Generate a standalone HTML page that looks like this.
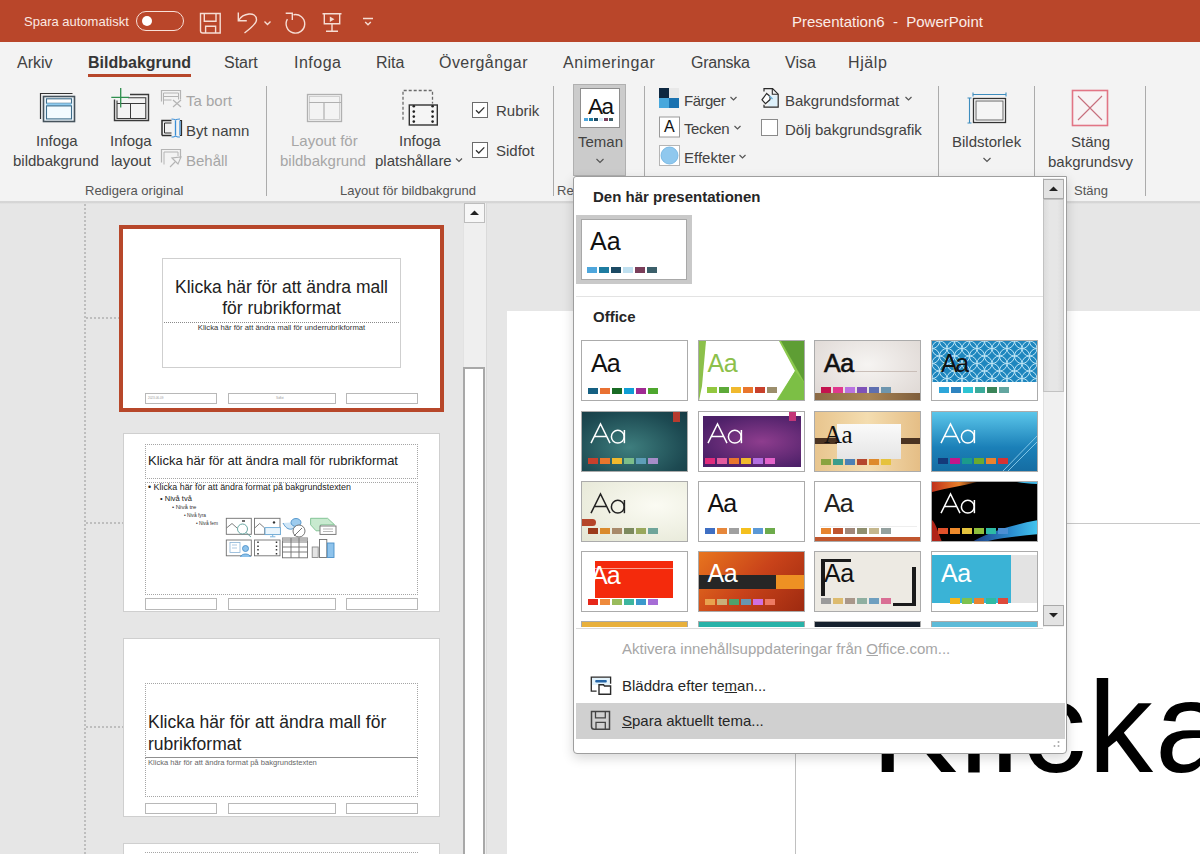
<!DOCTYPE html>
<html><head><meta charset="utf-8">
<style>
*{margin:0;padding:0;box-sizing:border-box}
html,body{width:1200px;height:854px;overflow:hidden;background:#E6E6E6;font-family:'Liberation Sans',sans-serif;color:#262626}
.a{position:absolute}
.t{position:absolute;white-space:nowrap;line-height:1}
#title{left:0;top:0;width:1200px;height:42px;background:#B9462A}
#ribbon{left:0;top:42px;width:1200px;height:160px;background:#F3F3F3;border-bottom:1px solid #D6D6D6}
.tab{font-size:16px;color:#424242;top:55px}
.rl{font-size:15px;color:#424242}
.dis{color:#A6A6A6}
.gl{font-size:13px;color:#555}
.sep{position:absolute;width:1px;background:#ABABAB}
</style></head><body>

<!-- TITLE BAR -->
<div id="title" class="a"></div>
<div class="t" style="left:24px;top:15px;font-size:13px;color:#FBE9E3">Spara automatiskt</div>
<div class="a" style="left:136px;top:11px;width:48px;height:20px;border:1.5px solid #F8E0D8;border-radius:10px"></div>
<div class="a" style="left:142px;top:16px;width:10px;height:10px;border-radius:5px;background:#FFF"></div>
<div class="t" style="left:792px;top:14px;font-size:15px;color:#FBEDE8;white-space:pre">Presentation6  -  PowerPoint</div>


<!-- QAT icons -->
<svg class="a" style="left:196px;top:10px" width="190" height="26" viewBox="0 0 190 26" fill="none" stroke="#F6DDD4" stroke-width="1.4">
  <!-- save -->
  <path d="M4.5 3.5H24.2V23H6.8Q4.5 23 4.5 20.7Z"/>
  <path d="M8.3 3.5V11.2H20V3.5"/>
  <path d="M9.6 23V16.2H19.6V23"/>
  <!-- undo -->
  <path d="M42.3 2.5v8.3h8.5"/>
  <path d="M42.5 10.5C47 3 60 1 60.5 9.5c0.3 4-6 9-12 13.5"/>
  <!-- chevron -->
  <path d="M68.5 11.5l3 3 3-3"/>
  <!-- redo circle -->
  <path d="M97.5 4.7A9.3 9.3 0 1 1 91.4 9.1"/>
  <path d="M89.7 3.3h6.6v6.7"/>
  <!-- present -->
  <path d="M126.5 3.8h19M128.3 3.8v10h15.4v-10M136 13.8v7.5M130 21.3h12"/>
  <path d="M133.8 6.5l4.6 2.8-4.6 2.8z" fill="#F6DDD4" stroke="none"/>
  <!-- customize -->
  <path d="M167 8.5h10M169.2 12l2.8 2.8 2.8-2.8"/>
</svg>

<!-- RIBBON -->
<div id="ribbon" class="a"></div>
<div class="t tab" style="left:17px">Arkiv</div>
<div class="t tab" style="left:88px;font-weight:700;color:#363636">Bildbakgrund</div>
<div class="a" style="left:88px;top:74px;width:103px;height:3px;background:#B7472A"></div>
<div class="t tab" style="left:224px">Start</div>
<div class="t tab" style="left:294px;letter-spacing:0.5px">Infoga</div>
<div class="t tab" style="left:376px">Rita</div>
<div class="t tab" style="left:439px;letter-spacing:0.45px">Övergångar</div>
<div class="t tab" style="left:563px;letter-spacing:0.55px">Animeringar</div>
<div class="t tab" style="left:691px;letter-spacing:-0.25px">Granska</div>
<div class="t tab" style="left:785px">Visa</div>
<div class="t tab" style="left:848px;letter-spacing:0.6px">Hjälp</div>



<!-- WORKSPACE -->
<div class="a" style="left:0;top:202px;width:1200px;height:2px;background:linear-gradient(#D0D0D0,#E6E6E6)"></div>
<!-- dotted guides -->
<div class="a" style="left:84px;top:204px;width:2px;height:650px;background:repeating-linear-gradient(180deg,#BEBEBE 0 2px,transparent 2px 4px)"></div>
<div class="a" style="left:86px;top:317px;width:33px;height:2px;background:repeating-linear-gradient(90deg,#BEBEBE 0 2px,transparent 2px 4px)"></div>
<div class="a" style="left:86px;top:522px;width:37px;height:2px;background:repeating-linear-gradient(90deg,#BEBEBE 0 2px,transparent 2px 4px)"></div>
<div class="a" style="left:86px;top:726px;width:37px;height:2px;background:repeating-linear-gradient(90deg,#BEBEBE 0 2px,transparent 2px 4px)"></div>

<!-- SLIDE 1 (selected) -->
<div class="a" style="left:119px;top:225px;width:325px;height:187px;border:4px solid #B7472A;background:#FFF"></div>
<div class="a" style="left:162px;top:258px;width:239px;height:65px;border:1px solid #CFCFCF;border-bottom:1px dotted #8A8A8A"></div>
<div class="a" style="left:162px;top:322px;width:239px;height:46px;border:1px solid #CFCFCF;border-top:0"></div>
<div class="t" style="left:163px;top:277px;width:237px;text-align:center;font-size:17.5px;color:#222;line-height:21px">Klicka här för att ändra mall<br>för rubrikformat</div>
<div class="t" style="left:163px;top:324px;width:237px;text-align:center;font-size:7.7px;color:#333">Klicka här för att ändra mall för underrubrikformat</div>
<div class="a" style="left:145px;top:393px;width:72px;height:11px;border:1px solid #B8B8B8"></div>
<div class="a" style="left:228px;top:393px;width:108px;height:11px;border:1px solid #B8B8B8"></div>
<div class="a" style="left:346px;top:393px;width:72px;height:11px;border:1px solid #B8B8B8"></div>
<div class="t" style="left:148px;top:397px;font-size:3px;color:#999">2023-06-09</div>
<div class="t" style="left:276px;top:397px;font-size:3px;color:#999">Sidfot</div>

<!-- SLIDE 2 -->
<div class="a" style="left:123px;top:433px;width:317px;height:179px;border:1px solid #CFCFCF;background:#FFF"></div>
<div class="a" style="left:145px;top:444px;width:273px;height:35px;border:1px dotted #A5A5A5"></div>
<div class="a" style="left:145px;top:482px;width:273px;height:113px;border:1px dotted #A5A5A5"></div>
<div class="t" style="left:148px;top:454px;font-size:13px;color:#222">Klicka här för att ändra mall för rubrikformat</div>
<div class="t" style="left:148px;top:483px;font-size:8.9px;color:#222">• Klicka här för att ändra format på bakgrundstexten</div>
<div class="t" style="left:160px;top:495px;font-size:7.5px;color:#222">• Nivå två</div>
<div class="t" style="left:172px;top:504px;font-size:6px;color:#333">• Nivå tre</div>
<div class="t" style="left:184px;top:513.5px;font-size:4.8px;color:#333">• Nivå fyra</div>
<div class="t" style="left:196px;top:522px;font-size:4.8px;color:#333">• Nivå fem</div>
<svg class="a" style="left:225px;top:517px" width="120" height="43" viewBox="0 0 120 43" fill="none" stroke-width="0.9">
  <rect x="1.3" y="1.3" width="25" height="16" stroke="#707070"/>
  <path d="M1.5 11l5.5-4.5 5 4.5" stroke="#707070"/>
  <path d="M17 4h3" stroke="#333" stroke-width="1.4"/>
  <circle cx="17.5" cy="12" r="5" stroke="#5A9E9A" fill="#FFF"/><path d="M21 15.5l5 4.5" stroke="#5A9E9A"/>
  <rect x="29.5" y="1.3" width="25.5" height="16" stroke="#707070"/>
  <path d="M29.7 11l5-4.5 5 4.5V17" stroke="#707070"/>
  <circle cx="49" cy="5.4" r="1.2" fill="#333" stroke="none"/>
  <rect x="40" y="10.6" width="15.4" height="7" fill="#EAF5FC" stroke="#6AAAD8"/><path d="M47.7 17.6v2M45 19.8h5.4" stroke="#6AAAD8"/>
  <path d="M58 6c2 4 5 7 9 6 3-1 5-3 6-7" stroke="#4A90C8" fill="#CFE6F7"/>
  <ellipse cx="71" cy="5.5" rx="5" ry="4" fill="#9CCBEE" stroke="#4A90C8"/>
  <circle cx="74" cy="14" r="6" fill="#FFF" stroke="#666"/><path d="M69 19l8-8" stroke="#666"/>
  <path d="M85.6 1.3h17l7 6.5h-14v6H91l-5.4-6z" fill="#C8EACF" stroke="#7CC08E"/>
  <rect x="95" y="9" width="16" height="8.4" fill="#FFF" stroke="#707070"/><path d="M98 12h10M98 14.5h10" stroke="#999" stroke-width="0.7"/>
  <rect x="1.3" y="23" width="25" height="15.8" stroke="#707070"/>
  <rect x="5" y="25.5" width="10" height="10" stroke="#8AB3D6" stroke-width="0.8"/><path d="M7 28h5M7 31h5" stroke="#8AB3D6" stroke-width="0.7"/>
  <circle cx="20.5" cy="31.5" r="3" fill="#8EC3EC" stroke="#4A90C8"/><path d="M15.5 40c1-4 9-4 10 0" fill="#8EC3EC" stroke="#4A90C8"/>
  <rect x="29.5" y="23" width="25.5" height="15.8" stroke="#707070"/>
  <path d="M33 24.5v1.5M33 28.5v1.5M33 32v1.5M33 36v1.5M51.5 24.5v1.5M51.5 28.5v1.5M51.5 32v1.5M51.5 36v1.5" stroke="#333" stroke-width="1.5"/>
  <rect x="57.5" y="21" width="25" height="19.8" stroke="#707070"/>
  <rect x="57.5" y="21" width="25" height="3" fill="#B8B8B8" stroke="none"/>
  <path d="M57.5 25h25M57.5 30h25M57.5 35h25M66 21v19.8M74 21v19.8" stroke="#707070"/>
  <rect x="87.2" y="30" width="6" height="10.5" fill="#E4E4E4" stroke="#8A8A8A"/>
  <rect x="94.5" y="22.5" width="7.3" height="18" fill="#FFF" stroke="#707070"/>
  <rect x="102.3" y="26" width="6.7" height="14.5" fill="#8EC3EC" stroke="#4A90C8"/>
</svg>
<div class="a" style="left:145px;top:598px;width:72px;height:12px;border:1px solid #B8B8B8"></div>
<div class="a" style="left:228px;top:598px;width:108px;height:12px;border:1px solid #B8B8B8"></div>
<div class="a" style="left:346px;top:598px;width:72px;height:12px;border:1px solid #B8B8B8"></div>

<!-- SLIDE 3 -->
<div class="a" style="left:123px;top:638px;width:317px;height:179px;border:1px solid #CFCFCF;background:#FFF"></div>
<div class="a" style="left:145px;top:683px;width:273px;height:75px;border:1px dotted #A5A5A5"></div>
<div class="a" style="left:145px;top:757px;width:273px;height:40px;border:1px dotted #A5A5A5;border-top:1px solid #8F8F8F"></div>
<div class="t" style="left:148px;top:712px;font-size:17.5px;color:#222;line-height:21.5px">Klicka här för att ändra mall för<br>rubrikformat</div>
<div class="t" style="left:148px;top:758.5px;font-size:7.6px;color:#666">Klicka här för att ändra format på bakgrundstexten</div>
<div class="a" style="left:145px;top:803px;width:72px;height:11px;border:1px solid #B8B8B8"></div>
<div class="a" style="left:228px;top:803px;width:108px;height:11px;border:1px solid #B8B8B8"></div>
<div class="a" style="left:346px;top:803px;width:72px;height:11px;border:1px solid #B8B8B8"></div>

<!-- SLIDE 4 -->
<div class="a" style="left:123px;top:843px;width:317px;height:30px;border:1px solid #CFCFCF;background:#FFF"></div>
<div class="a" style="left:145px;top:852px;width:273px;height:10px;border-top:1px dotted #A5A5A5"></div>

<!-- pane scrollbar -->
<div class="a" style="left:463px;top:203px;width:24px;height:651px;background:#EFEFEF;border-left:1px solid #E2E2E2;border-right:1px solid #DADADA"></div>
<div class="a" style="left:464px;top:203px;width:21px;height:20px;background:#F7F7F7;border:1px solid #BDBDBD"></div>
<svg class="a" style="left:469px;top:209px" width="11" height="7" viewBox="0 0 11 7"><path d="M1 6L5.5 1.5 10 6z" fill="#222"/></svg>
<div class="a" style="left:463px;top:367px;width:22px;height:490px;background:#FFF;border:2px solid #A8A8A8;border-top-width:2px"></div>

<!-- MAIN SLIDE -->
<div class="a" style="left:507px;top:311px;width:693px;height:543px;background:#FFF"></div>
<div class="a" style="left:795px;top:523px;width:405px;height:331px;border-left:1px solid #C0C0C0;border-top:1px solid #C8C8C8"></div>
<div class="t" style="left:871px;top:662px;font-size:130px;letter-spacing:1.9px;color:#000">Klicka</div>

<!-- GROUP: Redigera original -->
<svg class="a" style="left:36px;top:88px" width="120" height="38" viewBox="0 0 120 38" fill="none">
  <!-- infoga bildbakgrund -->
  <path d="M4.5 31V5.5h32" stroke="#333" stroke-width="1.2"/>
  <rect x="7.5" y="8.5" width="31" height="25" fill="#EEF8FE" stroke="#46535C" stroke-width="1.6"/>
  <rect x="10.5" y="10.8" width="25" height="4.5" fill="#FFF" stroke="#3F6D8A" stroke-width="1.1"/>
  <rect x="10.5" y="15.3" width="25" height="2.6" fill="#8DCBF0"/>
  <rect x="10.5" y="17.9" width="25" height="13" fill="#F3FBFF" stroke="#3F6D8A" stroke-width="1.1"/>
  <!-- infoga layout -->
  <path d="M78.5 11.5V32.5H112.5V6.5H94" stroke="#3A3A3A" stroke-width="1.4"/>
  <path d="M81 12.5V30.5H109.8V9.8H92" stroke="#3A3A3A" stroke-width="1.1"/>
  <path d="M81 15.5H109.8M94.5 15.5V30.5" stroke="#3A3A3A" stroke-width="1"/>
  <path d="M84.7 0v19.5M75.3 9.3H93" stroke="#2F8F4E" stroke-width="1.3"/>
</svg>
<div class="t rl" style="left:36px;top:133px">Infoga</div>
<div class="t rl" style="left:13px;top:153px">bildbakgrund</div>
<div class="t rl" style="left:110px;top:133px">Infoga</div>
<div class="t rl" style="left:111px;top:153px">layout</div>

<svg class="a" style="left:160px;top:89px" width="24" height="80" viewBox="0 0 24 80" fill="none">
  <!-- ta bort -->
  <path d="M1.5 12.5V1.5h19v9" stroke="#B4B4B4" stroke-width="1.2"/>
  <path d="M3.5 15.5V4h15v6.5M3.5 7.5h15M3.5 11h8" stroke="#B4B4B4" stroke-width="1"/>
  <path d="M13 11l8 7M21 11l-8 7" stroke="#B4B4B4" stroke-width="1.2"/>
  <!-- byt namn -->
  <path d="M2 46.5V31.5h9.5" stroke="#2E2E2E" stroke-width="1.5"/>
  <path d="M2 46.5h9.5" stroke="#2E2E2E" stroke-width="1.5"/>
  <path d="M4.5 44V34h7" stroke="#2E2E2E" stroke-width="1"/>
  <path d="M4.5 44h7" stroke="#2E2E2E" stroke-width="1"/>
  <path d="M15.5 31.5v15M20 31.5v15" stroke="#3B8ED6" stroke-width="1.3"/>
  <path d="M11.5 30c2.5 0 4 0.5 4 1.5 0-1 1.5-1.5 4.5-1.5M11.5 48c2.5 0 4-0.5 4-1.5 0 1 1.5 1.5 4.5 1.5" stroke="#3B8ED6" stroke-width="1.1"/>
  <path d="M20 31.5h1.5v15H20" stroke="#2E2E2E" stroke-width="1.2"/>
  <!-- behall -->
  <path d="M1.5 73.5V60.5h19v9" stroke="#B4B4B4" stroke-width="1.2"/>
  <path d="M4 75.5V63h14v4" stroke="#B4B4B4" stroke-width="1"/>
  <path d="M10 78l5-5M12 69l6 6 3-7z" stroke="#B4B4B4" stroke-width="1.1"/>
</svg>
<div class="t rl dis" style="left:186px;top:93px">Ta bort</div>
<div class="t rl" style="left:186px;top:123px">Byt namn</div>
<div class="t rl dis" style="left:186px;top:153px">Behåll</div>
<div class="t gl" style="left:85px;top:184px">Redigera original</div>
<div class="sep" style="left:266px;top:86px;height:110px"></div>

<!-- GROUP: Layout för bildbakgrund -->
<svg class="a" style="left:300px;top:88px" width="150" height="40" viewBox="0 0 150 40" fill="none">
  <rect x="7.5" y="6.5" width="34" height="27" stroke="#B0B0B0" stroke-width="1.3"/>
  <rect x="9.5" y="8.5" width="30" height="23" stroke="#C8C8C8" stroke-width="0.8"/>
  <path d="M9 14.5h32M24 14.5v17" stroke="#B0B0B0" stroke-width="1.2"/>
  <!-- infoga platshallare -->
  <path d="M103 31.8V2.5h29.5v13" stroke="#6A6A6A" stroke-width="1.3" stroke-dasharray="3 2"/>
  <rect x="109.3" y="17" width="28" height="20" fill="#F5F5F5" stroke="#333" stroke-width="1.4"/>
  <g fill="#222"><circle cx="113.8" cy="18.3" r="1.3"/><circle cx="113.8" cy="23.6" r="1.3"/><circle cx="113.8" cy="28.6" r="1.3"/><circle cx="113.8" cy="33.6" r="1.3"/><circle cx="132.6" cy="18.3" r="1.3"/><circle cx="132.6" cy="23.6" r="1.3"/><circle cx="132.6" cy="28.6" r="1.3"/><circle cx="132.6" cy="33.6" r="1.3"/></g>
</svg>
<div class="t rl dis" style="left:291px;top:133px">Layout för</div>
<div class="t rl dis" style="left:280px;top:153px">bildbakgrund</div>
<div class="t rl" style="left:399px;top:133px">Infoga</div>
<div class="t rl" style="left:375px;top:153px">platshållare</div>
<svg class="a" style="left:455px;top:157px" width="8" height="6" viewBox="0 0 8 6" fill="none"><path d="M1 1.5l3 3 3-3" stroke="#555" stroke-width="1.2"/></svg>

<div class="a" style="left:472px;top:102px;width:16px;height:16px;border:1px solid #6B6B6B;background:#FFF"></div>
<svg class="a" style="left:472px;top:102px" width="16" height="16" viewBox="0 0 16 16" fill="none"><path d="M4 8.3l2.8 2.7 5.5-5.6" stroke="#333" stroke-width="1.3"/></svg>
<div class="t rl" style="left:496px;top:103px">Rubrik</div>
<div class="a" style="left:472px;top:142px;width:16px;height:16px;border:1px solid #6B6B6B;background:#FFF"></div>
<svg class="a" style="left:472px;top:142px" width="16" height="16" viewBox="0 0 16 16" fill="none"><path d="M4 8.3l2.8 2.7 5.5-5.6" stroke="#333" stroke-width="1.3"/></svg>
<div class="t rl" style="left:496px;top:143px">Sidfot</div>
<div class="t gl" style="left:340px;top:184px">Layout för bildbakgrund</div>
<div class="sep" style="left:553px;top:86px;height:110px"></div>
<div class="t gl" style="left:557px;top:184px">Rec</div>

<!-- Teman (pressed) -->
<div class="a" style="left:573px;top:84px;width:53px;height:92px;background:#CBCBCB;border:1px solid #B0B0B0"></div>
<div class="a" style="left:580px;top:88px;width:40px;height:40px;background:#FFF;border:1px solid #8E8E8E"></div>
<div class="t" style="left:588px;top:96px;font-size:22.5px;color:#111;letter-spacing:-1.6px">Aa</div>
<svg class="a" style="left:584px;top:118px" width="32" height="4" viewBox="0 0 32 4"><rect x="0" y="0" width="4" height="3" fill="#4EA6DC"/><rect x="5" y="0" width="4" height="3" fill="#1E7CA0"/><rect x="10" y="0" width="4" height="3" fill="#1B4A64"/><rect x="15" y="0" width="4" height="3" fill="#D6ECF7"/><rect x="20" y="0" width="4" height="3" fill="#7A3E5A"/><rect x="25" y="0" width="4" height="3" fill="#3B5F6A"/></svg>
<div class="t rl" style="left:578px;top:134px">Teman</div>
<svg class="a" style="left:595px;top:158px" width="10" height="6" viewBox="0 0 10 6" fill="none"><path d="M1.5 1l3.5 3.5 3.5-3.5" stroke="#555" stroke-width="1.2"/></svg>
<div class="sep" style="left:644px;top:86px;height:90px"></div>

<!-- Färger / Tecken / Effekter -->
<svg class="a" style="left:659px;top:88px" width="22" height="80" viewBox="0 0 22 80">
  <rect x="0" y="0" width="10" height="10" fill="#0E2841"/>
  <rect x="10" y="0" width="10" height="10" fill="#E8E8E8"/>
  <rect x="0" y="10" width="10" height="10" fill="#47A7DC"/>
  <rect x="10" y="10" width="10" height="10" fill="#1A72B0"/>
  <rect x="0.5" y="29" width="20" height="20" fill="#FFF" stroke="#9A9A9A" stroke-width="1"/>
  <rect x="0.5" y="57.5" width="20" height="20" fill="#FFF" stroke="#B5B5B5" stroke-width="1"/>
  <circle cx="10.5" cy="67.5" r="8.5" fill="#8FC8EE" stroke="#6BB0E0" stroke-width="0.8"/>
</svg>
<div class="t" style="left:664px;top:119px;font-size:16px;color:#111">A</div>
<div class="t rl" style="left:684px;top:93px;letter-spacing:-0.5px">Färger</div>
<svg class="a" style="left:729px;top:96px" width="10" height="6" viewBox="0 0 10 6" fill="none"><path d="M1.5 1l3 3 3-3" stroke="#555" stroke-width="1.2"/></svg>
<div class="t rl" style="left:684px;top:121px;letter-spacing:-0.4px">Tecken</div>
<svg class="a" style="left:733px;top:125px" width="10" height="6" viewBox="0 0 10 6" fill="none"><path d="M1.5 1l3 3 3-3" stroke="#555" stroke-width="1.2"/></svg>
<div class="t rl" style="left:684px;top:150px">Effekter</div>
<svg class="a" style="left:738px;top:154px" width="10" height="6" viewBox="0 0 10 6" fill="none"><path d="M1.5 1l3 3 3-3" stroke="#555" stroke-width="1.2"/></svg>

<!-- Bakgrundsformat -->
<svg class="a" style="left:760px;top:87px" width="22" height="24" viewBox="0 0 22 24" fill="none">
  <rect x="8.5" y="8.5" width="9" height="11" fill="#DDF0FA"/>
  <path d="M4 4.5V1.6h8.6l5.6 5.6v13H4v-2.5" stroke="#2A2A2A" stroke-width="1.2"/>
  <path d="M12.3 1.8v5.4h5.8" stroke="#2A2A2A" stroke-width="1.1"/>
  <path d="M6.6 6.5L2 12.8l3.5 3.9 4.3-3.9c0.8-2-0.4-4.8-2.2-5.4z" fill="#FFF" stroke="#2A2A2A" stroke-width="1.2"/>
  <path d="M9.5 9l3 3" stroke="#6AAFD8" stroke-width="1.2"/>
</svg>
<div class="t rl" style="left:785px;top:93px">Bakgrundsformat</div>
<svg class="a" style="left:904px;top:96px" width="10" height="6" viewBox="0 0 10 6" fill="none"><path d="M1.5 1l3 3 3-3" stroke="#555" stroke-width="1.2"/></svg>
<div class="a" style="left:761px;top:119px;width:17px;height:17px;border:1px solid #8A8A8A;background:#FFF"></div>
<div class="t rl" style="left:785px;top:122px">Dölj bakgrundsgrafik</div>
<div class="sep" style="left:938px;top:86px;height:90px"></div>

<!-- Bildstorlek -->
<svg class="a" style="left:966px;top:92px" width="44" height="34" viewBox="0 0 44 34" fill="none">
  <path d="M7 2.5h33M7 0.5v4M40 0.5v4" stroke="#3E8DBE" stroke-width="1.1"/>
  <path d="M3.5 6v25M1.5 6h4M1.5 31h4" stroke="#3E8DBE" stroke-width="1.1"/>
  <rect x="7.5" y="6.5" width="32" height="24" fill="#FFF" stroke="#333" stroke-width="1.3"/>
  <rect x="10" y="9" width="27" height="19" fill="#F5F5F5" stroke="#666" stroke-width="1"/>
</svg>
<div class="t rl" style="left:952px;top:134px">Bildstorlek</div>
<svg class="a" style="left:982px;top:157px" width="10" height="6" viewBox="0 0 10 6" fill="none"><path d="M1.5 1l3.5 3.5 3.5-3.5" stroke="#555" stroke-width="1.2"/></svg>
<div class="sep" style="left:1034px;top:86px;height:90px"></div>

<!-- Stäng -->
<svg class="a" style="left:1071px;top:89px" width="38" height="38" viewBox="0 0 38 38" fill="none">
  <rect x="1.5" y="1.5" width="35" height="35" fill="#F7F3F4" stroke="#E27585" stroke-width="1.6"/>
  <path d="M7 7l24 24M31 7L7 31" stroke="#C76E7C" stroke-width="1.1"/>
</svg>
<div class="t rl" style="left:1071px;top:134px">Stäng</div>
<div class="t rl" style="left:1048px;top:154px">bakgrundsvy</div>
<div class="t gl" style="left:1074px;top:184px">Stäng</div>
<div class="sep" style="left:1145px;top:86px;height:110px"></div>


<!-- DROPDOWN -->
<div class="a" style="left:573px;top:176px;width:494px;height:578px;background:#FFF;border:1px solid #9E9E9E;border-radius:3px 0 4px 4px;box-shadow:0 4px 12px rgba(0,0,0,0.16)"></div>
<div class="t" style="left:593px;top:189px;font-size:15px;font-weight:700;color:#262626">Den här presentationen</div>
<div class="a" style="left:576px;top:215px;width:116px;height:69px;background:#C9C9C9"></div>
<div class="a" style="left:581px;top:219px;width:106px;height:61px;background:#FFF;border:1px solid #A8A8A8"></div>
<div class="t" style="left:590px;top:229px;font-size:25px;color:#111">Aa</div>
<div class="a" style="left:587px;top:267px;width:10px;height:6px;background:#4EA6DC"></div><div class="a" style="left:599px;top:267px;width:10px;height:6px;background:#1E7CA0"></div><div class="a" style="left:611px;top:267px;width:10px;height:6px;background:#1B4A64"></div><div class="a" style="left:623px;top:267px;width:10px;height:6px;background:#BFE0F0"></div><div class="a" style="left:635px;top:267px;width:10px;height:6px;background:#7A3E5A"></div><div class="a" style="left:647px;top:267px;width:10px;height:6px;background:#3B5F6A"></div>
<div class="a" style="left:576px;top:296px;width:467px;height:1px;background:#E3E3E3"></div>
<div class="t" style="left:593px;top:309px;font-size:15px;font-weight:700;color:#262626">Office</div>
<div class="a" style="left:581px;top:340px;width:107px;height:61px;border:1px solid #ABABAB;background:#FFF;overflow:hidden"><div class="t" style="left:9px;top:10px;font-size:25px;font-family:'Liberation Sans',sans-serif;letter-spacing:-0.8px;color:#111">Aa</div><div class="a" style="left:6px;top:47px;width:10px;height:6px;background:#156082"></div><div class="a" style="left:18px;top:47px;width:10px;height:6px;background:#E97132"></div><div class="a" style="left:30px;top:47px;width:10px;height:6px;background:#196B24"></div><div class="a" style="left:42px;top:47px;width:10px;height:6px;background:#0F9ED5"></div><div class="a" style="left:54px;top:47px;width:10px;height:6px;background:#A02B93"></div><div class="a" style="left:66px;top:47px;width:10px;height:6px;background:#4EA72E"></div></div>
<div class="a" style="left:697.5px;top:340px;width:107px;height:61px;border:1px solid #ABABAB;background:#FFF;overflow:hidden"><svg class="a" style="left:0;top:0" width="107" height="60" viewBox="0 0 107 60"><path d="M0 0h7L3 45 0 60z" fill="#8CC04A"/><path d="M80 0h27v60H77l19-30z" fill="#8CC94E"/><path d="M82 0h25v44z" fill="#5E9E34"/><path d="M96 30l11 14v16H78z" fill="#7CBF45"/></svg><div class="t" style="left:9px;top:10px;font-size:25px;font-family:'Liberation Sans',sans-serif;letter-spacing:-0.5px;color:#8CC04A">Aa</div><div class="a" style="left:8px;top:46px;width:10px;height:6px;background:#93C83F"></div><div class="a" style="left:20px;top:46px;width:10px;height:6px;background:#5DAA39"></div><div class="a" style="left:32px;top:46px;width:10px;height:6px;background:#F0B92E"></div><div class="a" style="left:44px;top:46px;width:10px;height:6px;background:#E9762D"></div><div class="a" style="left:56px;top:46px;width:10px;height:6px;background:#C8402C"></div><div class="a" style="left:68px;top:46px;width:10px;height:6px;background:#9C8E6C"></div></div>
<div class="a" style="left:814px;top:340px;width:107px;height:61px;border:1px solid #ABABAB;background:radial-gradient(ellipse at 50% 40%,#F6F4F2,#DDD6D2);overflow:hidden"><div class="a" style="left:0;top:52px;width:107px;height:8px;background:linear-gradient(90deg,#8B6A45,#A98556,#7D5C3A)"></div><div class="a" style="left:40px;top:30px;width:62px;height:1px;background:#C9BEB8"></div><div class="t" style="left:9px;top:10px;font-size:25px;-webkit-text-stroke:0.6px #111;font-family:'Liberation Sans',sans-serif;letter-spacing:-0.5px;color:#111">Aa</div><div class="a" style="left:6px;top:46px;width:10px;height:6px;background:#C3134E"></div><div class="a" style="left:18px;top:46px;width:10px;height:6px;background:#E0388D"></div><div class="a" style="left:30px;top:46px;width:10px;height:6px;background:#B972E0"></div><div class="a" style="left:42px;top:46px;width:10px;height:6px;background:#7F52B8"></div><div class="a" style="left:54px;top:46px;width:10px;height:6px;background:#5E6FB0"></div><div class="a" style="left:66px;top:46px;width:10px;height:6px;background:#6E96AF"></div></div>
<div class="a" style="left:931px;top:340px;width:107px;height:61px;border:1px solid #ABABAB;background:#FFF;overflow:hidden"><svg class="a" style="left:0;top:0" width="107" height="41"><defs><pattern id="pt" x="0" y="0" width="15" height="15" patternUnits="userSpaceOnUse"><rect width="15" height="15" fill="#1E86BE"/><circle cx="0" cy="0" r="7.5" fill="none" stroke="#BFE6F6" stroke-width="1"/><circle cx="15" cy="0" r="7.5" fill="none" stroke="#BFE6F6" stroke-width="1"/><circle cx="0" cy="15" r="7.5" fill="none" stroke="#BFE6F6" stroke-width="1"/><circle cx="15" cy="15" r="7.5" fill="none" stroke="#BFE6F6" stroke-width="1"/><circle cx="7.5" cy="7.5" r="7.5" fill="none" stroke="#BFE6F6" stroke-width="1"/></pattern></defs><rect width="107" height="41" fill="url(#pt)"/></svg><div class="t" style="left:9px;top:10px;font-size:25px;font-family:'Liberation Sans',sans-serif;letter-spacing:-2.5px;color:#111">Aa</div><div class="a" style="left:7px;top:46px;width:10px;height:6px;background:#2DA6DA"></div><div class="a" style="left:19px;top:46px;width:10px;height:6px;background:#2E84C0"></div><div class="a" style="left:31px;top:46px;width:10px;height:6px;background:#2EC4D3"></div><div class="a" style="left:43px;top:46px;width:10px;height:6px;background:#3BAA9A"></div><div class="a" style="left:55px;top:46px;width:10px;height:6px;background:#3B8559"></div><div class="a" style="left:67px;top:46px;width:10px;height:6px;background:#63A6A0"></div></div>
<div class="a" style="left:581px;top:410.5px;width:107px;height:61px;border:1px solid #ABABAB;background:radial-gradient(ellipse at 45% 60%,#3E7E7E,#1D4A52 70%,#173B44);overflow:hidden"><div class="a" style="left:91px;top:0;width:7px;height:10px;background:#B83B2E"></div><svg class="a" style="left:0;top:0" width="107" height="60" viewBox="0 0 107 60" fill="none" stroke="#FFF" stroke-width="1.5"><path d="M9 31.2L18.5 12L28 31.2M12.6 24.5H24.4"/><circle cx="35.8" cy="24.7" r="6.4"/><path d="M42.4 18V31.2"/></svg><div class="a" style="left:6px;top:46px;width:10px;height:6px;background:#C8402C"></div><div class="a" style="left:18px;top:46px;width:10px;height:6px;background:#E9762D"></div><div class="a" style="left:30px;top:46px;width:10px;height:6px;background:#F0B92E"></div><div class="a" style="left:42px;top:46px;width:10px;height:6px;background:#7CBE8A"></div><div class="a" style="left:54px;top:46px;width:10px;height:6px;background:#5E9EB8"></div><div class="a" style="left:66px;top:46px;width:10px;height:6px;background:#A68DC9"></div></div>
<div class="a" style="left:697.5px;top:410.5px;width:107px;height:61px;border:1px solid #ABABAB;background:#FFF;overflow:hidden"><div class="a" style="left:4px;top:4px;width:98px;height:51px;background:radial-gradient(ellipse at 60% 50%,#8E3D8E,#4C2068 80%)"></div><div class="a" style="left:90px;top:0;width:7px;height:9px;background:#C33678"></div><svg class="a" style="left:0;top:0" width="107" height="60" viewBox="0 0 107 60" fill="none" stroke="#FFF" stroke-width="1.5"><path d="M9 31.2L18.5 12L28 31.2M12.6 24.5H24.4"/><circle cx="35.8" cy="24.7" r="6.4"/><path d="M42.4 18V31.2"/></svg><div class="a" style="left:6px;top:46px;width:10px;height:6px;background:#E02B7C"></div><div class="a" style="left:18px;top:46px;width:10px;height:6px;background:#E35C9E"></div><div class="a" style="left:30px;top:46px;width:10px;height:6px;background:#E9762D"></div><div class="a" style="left:42px;top:46px;width:10px;height:6px;background:#F0B92E"></div><div class="a" style="left:54px;top:46px;width:10px;height:6px;background:#B46EE0"></div><div class="a" style="left:66px;top:46px;width:10px;height:6px;background:#E362C9"></div></div>
<div class="a" style="left:814px;top:410.5px;width:107px;height:61px;border:1px solid #ABABAB;background:linear-gradient(90deg,#E8C58E,#F4DDB0 50%,#E5BE86);overflow:hidden"><div class="a" style="left:0;top:26px;width:107px;height:6px;background:#4A3322"></div><div class="a" style="left:22px;top:12px;width:64px;height:35px;background:linear-gradient(#FAFAFA,#E5E5E5)"></div><div class="t" style="left:9px;top:10px;font-size:25px;font-family:'Liberation Serif',serif;letter-spacing:-0.5px;color:#111">Aa</div><div class="a" style="left:6px;top:47px;width:10px;height:6px;background:#8AA340"></div><div class="a" style="left:18px;top:47px;width:10px;height:6px;background:#3B9C8B"></div><div class="a" style="left:30px;top:47px;width:10px;height:6px;background:#4D80B4"></div><div class="a" style="left:42px;top:47px;width:10px;height:6px;background:#B5472E"></div><div class="a" style="left:54px;top:47px;width:10px;height:6px;background:#DE8A2C"></div><div class="a" style="left:66px;top:47px;width:10px;height:6px;background:#E6C23D"></div></div>
<div class="a" style="left:931px;top:410.5px;width:107px;height:61px;border:1px solid #ABABAB;background:linear-gradient(180deg,#5BC6EA,#1B80B8 60%,#156DA3);overflow:hidden"><svg class="a" style="left:0;top:0" width="107" height="60"><path d="M70 60L107 22M75 60L107 28" stroke="#9BD7F2" stroke-width="0.8"/></svg><svg class="a" style="left:0;top:0" width="107" height="60" viewBox="0 0 107 60" fill="none" stroke="#FFF" stroke-width="1.5"><path d="M9 31.2L18.5 12L28 31.2M12.6 24.5H24.4"/><circle cx="35.8" cy="24.7" r="6.4"/><path d="M42.4 18V31.2"/></svg><div class="a" style="left:6px;top:46px;width:10px;height:6px;background:#14397A"></div><div class="a" style="left:18px;top:46px;width:10px;height:6px;background:#C2168A"></div><div class="a" style="left:30px;top:46px;width:10px;height:6px;background:#1B9B8C"></div><div class="a" style="left:42px;top:46px;width:10px;height:6px;background:#6BAA2F"></div><div class="a" style="left:54px;top:46px;width:10px;height:6px;background:#E9832D"></div><div class="a" style="left:66px;top:46px;width:10px;height:6px;background:#D63233"></div></div>
<div class="a" style="left:581px;top:481px;width:107px;height:61px;border:1px solid #ABABAB;background:radial-gradient(ellipse at 70% 40%,#FBFBF3,#E4E6D4);overflow:hidden"><div class="a" style="left:0;top:37px;width:14px;height:7px;background:#B5452A;border-radius:0 4px 4px 0"></div><svg class="a" style="left:0;top:0" width="107" height="60" viewBox="0 0 107 60" fill="none" stroke="#222" stroke-width="1.5"><path d="M9 31.2L18.5 12L28 31.2M12.6 24.5H24.4"/><circle cx="35.8" cy="24.7" r="6.4"/><path d="M42.4 18V31.2"/></svg><div class="a" style="left:6px;top:46px;width:10px;height:6px;background:#9B3A1B"></div><div class="a" style="left:18px;top:46px;width:10px;height:6px;background:#DA8A2C"></div><div class="a" style="left:30px;top:46px;width:10px;height:6px;background:#A88A6A"></div><div class="a" style="left:42px;top:46px;width:10px;height:6px;background:#7C8A5E"></div><div class="a" style="left:54px;top:46px;width:10px;height:6px;background:#99A85C"></div><div class="a" style="left:66px;top:46px;width:10px;height:6px;background:#6FA59A"></div></div>
<div class="a" style="left:697.5px;top:481px;width:107px;height:61px;border:1px solid #ABABAB;background:#FFF;overflow:hidden"><div class="t" style="left:9px;top:9px;font-size:25px;font-family:'Liberation Sans',sans-serif;letter-spacing:-0.8px;color:#111">Aa</div><div class="a" style="left:6px;top:46px;width:10px;height:6px;background:#3F6FC3"></div><div class="a" style="left:18px;top:46px;width:10px;height:6px;background:#E6873B"></div><div class="a" style="left:30px;top:46px;width:10px;height:6px;background:#A0A0A0"></div><div class="a" style="left:42px;top:46px;width:10px;height:6px;background:#F4C01E"></div><div class="a" style="left:54px;top:46px;width:10px;height:6px;background:#5B98D6"></div><div class="a" style="left:66px;top:46px;width:10px;height:6px;background:#6DAB4B"></div></div>
<div class="a" style="left:814px;top:481px;width:107px;height:61px;border:1px solid #ABABAB;background:#FFF;overflow:hidden"><div class="a" style="left:0;top:55px;width:107px;height:5px;background:#C0562E"></div><div class="a" style="left:5px;top:44px;width:97px;height:1px;background:#EEE"></div><div class="t" style="left:9px;top:9px;font-size:25px;font-family:'Liberation Sans',sans-serif;letter-spacing:-0.8px;color:#222">Aa</div><div class="a" style="left:6px;top:46px;width:10px;height:6px;background:#E68430"></div><div class="a" style="left:18px;top:46px;width:10px;height:6px;background:#C0542E"></div><div class="a" style="left:30px;top:46px;width:10px;height:6px;background:#A08779"></div><div class="a" style="left:42px;top:46px;width:10px;height:6px;background:#8F8F6F"></div><div class="a" style="left:54px;top:46px;width:10px;height:6px;background:#C4B78E"></div><div class="a" style="left:66px;top:46px;width:10px;height:6px;background:#94A19F"></div></div>
<div class="a" style="left:931px;top:481px;width:107px;height:61px;border:1px solid #ABABAB;background:#000;overflow:hidden"><svg class="a" style="left:0;top:0" width="107" height="60" viewBox="0 0 107 60"><defs><linearGradient id="g12a" x1="0" x2="1"><stop offset="0" stop-color="#C0301A"/><stop offset="0.6" stop-color="#E8802A"/><stop offset="1" stop-color="#402010"/></linearGradient><linearGradient id="g12b" x1="0" x2="1"><stop offset="0" stop-color="#1A3A80"/><stop offset="0.6" stop-color="#2C8FD0"/><stop offset="1" stop-color="#45C8F0"/></linearGradient></defs><path d="M0 0h45C30 4 15 6 0 10z" fill="url(#g12a)"/><path d="M0 38c4 4 6 12 10 22H0z" fill="#B02418"/><path d="M40 60c20-12 45-18 67-22v14c-20 2-40 4-55 8z" fill="url(#g12b)"/><path d="M85 0h22v2C98 2 92 1 85 0z" fill="#3FB8E8"/></svg><svg class="a" style="left:0;top:0" width="107" height="60" viewBox="0 0 107 60" fill="none" stroke="#FFF" stroke-width="1.5"><path d="M9 31.2L18.5 12L28 31.2M12.6 24.5H24.4"/><circle cx="35.8" cy="24.7" r="6.4"/><path d="M42.4 18V31.2"/></svg><div class="a" style="left:6px;top:46px;width:10px;height:6px;background:#E0502A"></div><div class="a" style="left:18px;top:46px;width:10px;height:6px;background:#EE8A2B"></div><div class="a" style="left:30px;top:46px;width:10px;height:6px;background:#E5C33D"></div><div class="a" style="left:42px;top:46px;width:10px;height:6px;background:#8FBF3C"></div><div class="a" style="left:54px;top:46px;width:10px;height:6px;background:#2DBBA5"></div><div class="a" style="left:66px;top:46px;width:10px;height:6px;background:#4C8FD3"></div></div>
<div class="a" style="left:581px;top:551px;width:107px;height:61px;border:1px solid #ABABAB;background:#FFF;overflow:hidden"><div class="a" style="left:13px;top:9px;width:78px;height:37px;background:#F42A0C"></div><div class="a" style="left:13px;top:16px;width:78px;height:1px;background:#F8A090"></div><div class="t" style="left:9px;top:11px;font-size:25px;font-family:'Liberation Sans',sans-serif;letter-spacing:-0.8px;color:#FFF">Aa</div><div class="a" style="left:6px;top:47px;width:10px;height:6px;background:#E6271A"></div><div class="a" style="left:18px;top:47px;width:10px;height:6px;background:#EE8A3C"></div><div class="a" style="left:30px;top:47px;width:10px;height:6px;background:#99BB5C"></div><div class="a" style="left:42px;top:47px;width:10px;height:6px;background:#3DB59E"></div><div class="a" style="left:54px;top:47px;width:10px;height:6px;background:#3C99CC"></div><div class="a" style="left:66px;top:47px;width:10px;height:6px;background:#A66DD6"></div></div>
<div class="a" style="left:697.5px;top:551px;width:107px;height:61px;border:1px solid #ABABAB;background:linear-gradient(135deg,#E8751E,#C9431A 50%,#9E2A10);overflow:hidden"><div class="a" style="left:0;top:23px;width:77px;height:14px;background:#262626"></div><div class="a" style="left:77px;top:23px;width:30px;height:14px;background:#EE9123"></div><div class="t" style="left:9px;top:9px;font-size:25px;font-family:'Liberation Sans',sans-serif;letter-spacing:-0.5px;color:#FFF">Aa</div><div class="a" style="left:6px;top:47px;width:10px;height:6px;background:#E9A24E"></div><div class="a" style="left:18px;top:47px;width:10px;height:6px;background:#C8B07A"></div><div class="a" style="left:30px;top:47px;width:10px;height:6px;background:#4FA16C"></div><div class="a" style="left:42px;top:47px;width:10px;height:6px;background:#6996AE"></div><div class="a" style="left:54px;top:47px;width:10px;height:6px;background:#D070DE"></div><div class="a" style="left:66px;top:47px;width:10px;height:6px;background:#EE7A62"></div></div>
<div class="a" style="left:814px;top:551px;width:107px;height:61px;border:1px solid #ABABAB;background:#EDEAE3;overflow:hidden"><div class="a" style="left:6px;top:7px;width:3.5px;height:37px;background:#1A1A1A"></div><div class="a" style="left:6px;top:7px;width:30px;height:3px;background:#1A1A1A"></div><div class="a" style="left:97px;top:15px;width:3.5px;height:39px;background:#1A1A1A"></div><div class="a" style="left:78px;top:51px;width:22.5px;height:3px;background:#1A1A1A"></div><div class="t" style="left:9px;top:9px;font-size:25px;font-family:'Liberation Sans',sans-serif;letter-spacing:-0.5px;color:#111">Aa</div><div class="a" style="left:6px;top:46px;width:10px;height:6px;background:#9A9A9A"></div><div class="a" style="left:18px;top:46px;width:10px;height:6px;background:#DDBB6E"></div><div class="a" style="left:30px;top:46px;width:10px;height:6px;background:#A9978A"></div><div class="a" style="left:42px;top:46px;width:10px;height:6px;background:#8FAFA0"></div><div class="a" style="left:54px;top:46px;width:10px;height:6px;background:#6F9FBF"></div><div class="a" style="left:66px;top:46px;width:10px;height:6px;background:#D96E94"></div></div>
<div class="a" style="left:931px;top:551px;width:107px;height:61px;border:1px solid #ABABAB;background:#FFF;overflow:hidden"><div class="a" style="left:0;top:3px;width:79px;height:48px;background:#3AB3D6"></div><div class="a" style="left:79px;top:3px;width:28px;height:48px;background:#E3E3E3"></div><div class="t" style="left:9px;top:9px;font-size:25px;font-family:'Liberation Sans',sans-serif;letter-spacing:-0.5px;color:#FFF">Aa</div><div class="a" style="left:18px;top:46px;width:10px;height:6px;background:#F2B51C"></div><div class="a" style="left:30px;top:46px;width:10px;height:6px;background:#7EC24F"></div><div class="a" style="left:42px;top:46px;width:10px;height:6px;background:#E98431"></div><div class="a" style="left:54px;top:46px;width:10px;height:6px;background:#2EBBA3"></div><div class="a" style="left:66px;top:46px;width:10px;height:6px;background:#DE4A3B"></div></div>
<div class="a" style="left:581px;top:621px;width:107px;height:6px;border:1px solid #ABABAB;border-bottom:0;background:#E8B03C"></div>
<div class="a" style="left:697.5px;top:621px;width:107px;height:6px;border:1px solid #ABABAB;border-bottom:0;background:#28B2A8"></div>
<div class="a" style="left:814px;top:621px;width:107px;height:6px;border:1px solid #ABABAB;border-bottom:0;background:#16212E"></div>
<div class="a" style="left:931px;top:621px;width:107px;height:6px;border:1px solid #ABABAB;border-bottom:0;background:#5DBBD8"></div>
<div class="a" style="left:576px;top:628px;width:467px;height:1px;background:#DADADA"></div>
<!-- gallery scrollbar -->
<div class="a" style="left:1043px;top:178px;width:21px;height:449px;background:#F0F0F0;border-left:1px solid #E0E0E0"></div>
<div class="a" style="left:1043px;top:179px;width:21px;height:20px;background:#E3E3E3;border:1px solid #A9A9A9"></div>
<svg class="a" style="left:1048px;top:185px" width="11" height="7" viewBox="0 0 11 7"><path d="M1 6L5.5 1.5 10 6z" fill="#222"/></svg>
<div class="a" style="left:1043px;top:199px;width:21px;height:193px;background:linear-gradient(90deg,#DCDCDC,#E6E6E6 30%,#E6E6E6 70%,#DCDCDC);border:1px solid #C2C2C2"></div>
<div class="a" style="left:1043px;top:605px;width:21px;height:21px;background:#E3E3E3;border:1px solid #A9A9A9"></div>
<svg class="a" style="left:1048px;top:612px" width="11" height="7" viewBox="0 0 11 7"><path d="M1 1L5.5 5.5 10 1z" fill="#222"/></svg>
<!-- menu items -->
<div class="t" style="left:622px;top:641px;font-size:15px;color:#A6A6A6">Aktivera innehållsuppdateringar från <u>O</u>ffice.com...</div>
<svg class="a" style="left:590px;top:676px" width="22" height="20" viewBox="0 0 22 20" fill="none">
  <rect x="2" y="2" width="18" height="7" fill="#E3F3FC"/>
  <path d="M6.6 15.2H1.3V1.2H20.6V7.7" stroke="#2A2A2A" stroke-width="1.3"/>
  <rect x="5.2" y="4" width="11.6" height="2.4" rx="1" fill="#2566A8"/>
  <path d="M9 18.3V8.8h4.5l1 1.2h6.1v8.3z" fill="#FFF" stroke="#2A2A2A" stroke-width="1.4"/>
</svg>
<div class="t" style="left:622px;top:678px;font-size:15px;color:#262626">Bläddra efter te<u>m</u>an...</div>
<div class="a" style="left:576px;top:703px;width:489px;height:36px;background:#D0D0D0"></div>
<svg class="a" style="left:590px;top:710px" width="22" height="21" viewBox="0 0 22 21" fill="none">
  <path d="M1.5 1.5H19.5V19.3H4.3Q1.5 19.3 1.5 16.5Z" stroke="#444" stroke-width="1.5"/>
  <path d="M5.5 1.5V7.8H15.3V1.5M6 19.3V12.3H15.3V19.3" stroke="#444" stroke-width="1.3"/>
</svg>
<div class="t" style="left:622px;top:713px;font-size:15px;color:#262626"><u>S</u>para aktuellt tema...</div>
<svg class="a" style="left:1051px;top:740px" width="10" height="10" viewBox="0 0 10 10"><circle cx="7.5" cy="2" r="1" fill="#AAA"/><circle cx="3.5" cy="6" r="1" fill="#AAA"/><circle cx="7.5" cy="6" r="1" fill="#AAA"/></svg>

</body></html>
